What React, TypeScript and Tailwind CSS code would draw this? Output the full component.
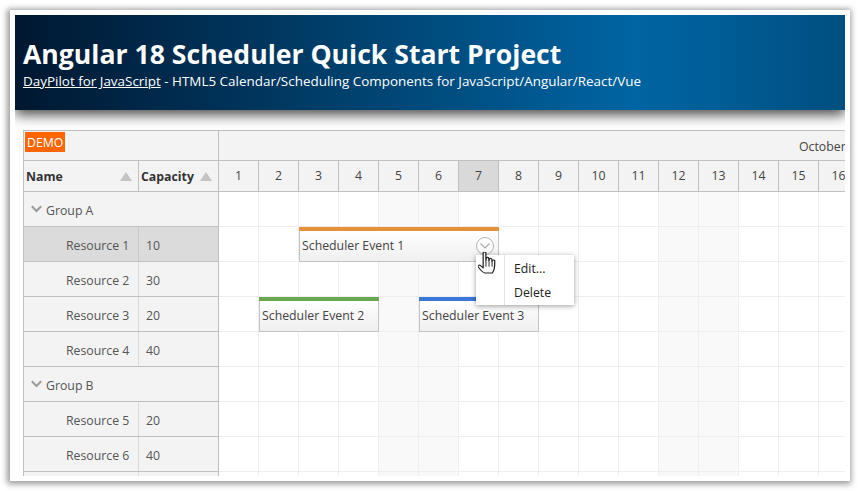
const DAYS = Array.from({ length: 16 }, (_, i) => i + 1);

const ROWS = [
  { id: "a", name: "Group A", group: true },
  { id: "r1", name: "Resource 1", capacity: "10", selected: true },
  { id: "r2", name: "Resource 2", capacity: "30" },
  { id: "r3", name: "Resource 3", capacity: "20" },
  { id: "r4", name: "Resource 4", capacity: "40" },
  { id: "b", name: "Group B", group: true },
  { id: "r5", name: "Resource 5", capacity: "20" },
  { id: "r6", name: "Resource 6", capacity: "40" },
  { id: "r7", name: "", capacity: "" },
];

const isWeekend = (d: number) => d === 5 || d === 6 || d === 12 || d === 13;

function SortArrow() {
  return <span className="ml-auto mr-[6px] mb-[1px] h-0 w-0 border-x-[6px] border-b-[9px] border-x-transparent border-b-[#c4c4c4]" />;
}

function Chevron() {
  return (
    <svg width="11" height="8" viewBox="0 0 11 8" className="mr-[4px] mb-[4px]">
      <path d="M0.800 1.200 L5.500 6 L10.200 1.200" fill="none" stroke="#9a9a9a" strokeWidth="2" />
    </svg>
  );
}

function EventBox({ text, className, bar, children }: { text: string; className: string; bar: string; children?: React.ReactNode }) {
  return (
    <div className={`absolute top-0 h-[35px] ${className}`}>
      <div className={`h-[4px] ${bar}`} />
      <div className="flex h-[31px] items-center border-x border-b border-[#c4c4c4] bg-gradient-to-b from-white to-[#efefef] pl-[2px] text-[#444]">
        {text}
      </div>
      {children}
    </div>
  );
}

function HandCursor() {
  return (
    <svg width="19" height="24" viewBox="1 1 15.500 22" preserveAspectRatio="none" className="absolute left-[179px] top-[25px] z-30">
      <path
        d="M5.200 1.900c0-1.300 2.200-1.300 2.200 0v7.200l.3-2.300c.2-1.200 2.100-1.100 2.100.1l.1 2.400.4-1.700c.3-1.100 2-.9 2 .3l.1 2 .4-1c.4-1 1.900-.7 1.900.4 0 3-.1 5.200-.5 7.200-.3 1.500-.8 2.600-1.500 3.700H6.700C5.300 20 2.400 16.600 1.200 14.700c-.7-1.100.7-2.300 1.800-1.300l2.200 2.100z"
        fill="#fff"
        stroke="#222"
        strokeWidth="1"
        strokeLinejoin="round"
      />
      <path d="M7.500 9.500v5M10 9.500v5M12.500 10v4.500" stroke="#222" strokeWidth="0.800" fill="none" />
    </svg>
  );
}

export default function App() {
  return (
    <div className="h-[491px] w-[860px] overflow-hidden bg-white p-[10px] font-['Open_Sans','Noto_Sans',sans-serif] text-[12.3px] text-[#333]">
      <div className="h-[471px] w-[840px] bg-white p-[5px] shadow-[-1px_1px_6px_2px_rgba(0,0,0,0.4)]">
        <div className="h-[461px] w-[830px] overflow-hidden bg-white">
          <div className="relative z-10 h-[95px] bg-[linear-gradient(to_right,#001730_0%,#0065a3_75%,#004f80_100%)] pl-[8px] pt-[23px] text-white shadow-[0_5px_12px_rgba(0,0,0,0.7)]">
            <h1 className="text-[26.6px] font-bold leading-[32px]">Angular 18 Scheduler Quick Start Project</h1>
            <p className="pt-[1px] text-[13.45px] leading-[20px]">
              <a className="underline">DayPilot for JavaScript</a> - HTML5 Calendar/Scheduling Components for JavaScript/Angular/React/Vue
            </p>
          </div>

          <div className="ml-[8px] mt-[20px] h-[346px] overflow-hidden border-l border-t border-[#c0c0c0]">
            <div className="flex h-[30px] border-b border-[#c0c0c0] bg-[#f3f3f3]">
              <div className="w-[195px] shrink-0 border-r border-[#c0c0c0]">
                <span className="ml-[1px] mt-[1px] inline-block h-[20px] bg-[#ff6600] px-[2px] leading-[21px] text-white">DEMO</span>
              </div>
              <div className="w-[1238px] shrink-0 pt-[1px] text-center leading-[30px] text-[#444]">October 2024</div>
            </div>

            <div className="flex h-[31px] border-b border-[#c0c0c0] bg-[#f3f3f3]">
              <div className="flex w-[115px] shrink-0 items-center border-r border-[#c0c0c0] pl-[2px] pt-[2px] font-bold">
                Name
                <SortArrow />
              </div>
              <div className="flex w-[80px] shrink-0 items-center border-r border-[#c0c0c0] pl-[2px] pt-[2px] font-bold">
                Capacity
                <SortArrow />
              </div>
              {DAYS.map((d) => (
                <div
                  key={d}
                  className={`flex w-[40px] shrink-0 items-center justify-center border-r border-[#c0c0c0] pt-[1px] text-[#444] ${d === 7 ? "bg-[#d9d9d9]" : ""}`}
                >
                  {d}
                </div>
              ))}
            </div>

            {ROWS.map((row) => (
              <div key={row.id} className="flex h-[35px]">
                {row.group ? (
                  <div className="flex w-[195px] shrink-0 items-center border-b border-r border-[#c0c0c0] bg-[#f3f3f3] pl-[7px] pt-[4px] text-[#555]">
                    <Chevron />
                    {row.name}
                  </div>
                ) : (
                  <div className={`flex w-[195px] shrink-0 border-b border-r border-[#c0c0c0] ${row.selected ? "bg-[#dbdbdb]" : "bg-[#f3f3f3]"}`}>
                    <div className={`flex w-[115px] shrink-0 items-center border-r pl-[42px] pt-[4px] text-[#555] ${row.selected ? "border-[#c8c8c8]" : "border-[#dcdcdc]"}`}>
                      {row.name}
                    </div>
                    <div className="flex items-center pl-[7px] pt-[4px] text-[#555]">{row.capacity}</div>
                  </div>
                )}
                <div className="relative flex shrink-0">
                  {DAYS.map((d) => (
                    <div
                      key={d}
                      className={`h-[35px] w-[40px] shrink-0 border-b border-r border-[#eeeeee] ${isWeekend(d) ? "bg-[#f9f9f9]" : "bg-white"}`}
                    />
                  ))}
                  {row.id === "r1" && (
                    <EventBox text="Scheduler Event 1" className="left-[80px] z-20 w-[200px]" bar="bg-[#e69138]">
                      <span className="absolute left-[177px] top-[10px] flex h-[18px] w-[18px] items-center justify-center rounded-full border border-[#b4b4b4] bg-white/60">
                        <svg width="10" height="6" viewBox="0 0 10 6">
                          <path d="M0.500 0.500 L5 5 L9.500 0.500" fill="none" stroke="#aaa" strokeWidth="1.100" />
                        </svg>
                      </span>
                      <div className="absolute left-[177px] top-[28px] z-20 flex h-[50px] w-[98px] bg-white text-[#222] shadow-[0_1px_5px_rgba(0,0,0,0.4)]">
                        <div className="w-[29px] border-r border-[#e6e6e6]" />
                        <div className="pl-[9px] pt-[2px] leading-[24px]">
                          <div>Edit...</div>
                          <div>Delete</div>
                        </div>
                      </div>
                      <HandCursor />
                    </EventBox>
                  )}
                  {row.id === "r3" && <EventBox text="Scheduler Event 2" className="left-[40px] z-10 w-[120px]" bar="bg-[#6aa84f]" />}
                  {row.id === "r3" && <EventBox text="Scheduler Event 3" className="left-[200px] z-10 w-[120px]" bar="bg-[#3c78d8]" />}
                </div>
              </div>
            ))}
          </div>
        </div>
      </div>
    </div>
  );
}
